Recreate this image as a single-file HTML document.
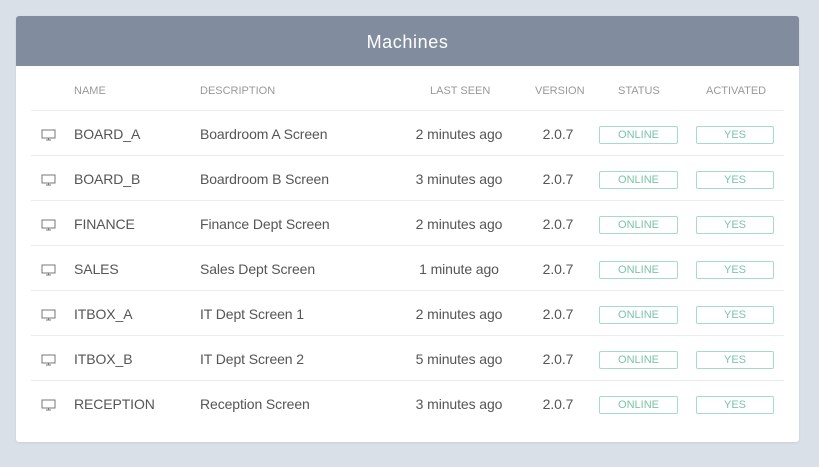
<!DOCTYPE html>
<html><head><style>
body{margin:0;width:819px;height:467px;background:#d9e0e8;font-family:"Liberation Sans",sans-serif;position:relative;overflow:hidden}
.card{position:absolute;left:16px;top:16px;width:783px;height:426px;background:#fff;border-radius:3px;box-shadow:0 1px 2px rgba(0,0,0,.08)}
.hd{height:50px;background:#818d9e;color:#fff;font-size:18px;text-align:center;line-height:52px;border-radius:3px 3px 0 0;letter-spacing:.6px}
.th{position:absolute;top:69px;font-size:11px;color:#999}
.row{position:absolute;left:15px;width:753px;height:45px;border-top:1px solid #ececec}
.row span{position:absolute;top:1px;line-height:45px;font-size:14px;color:#555;letter-spacing:-.1px}
.b{position:absolute;top:15px;height:16px;border:1px solid #a6dcc6;border-radius:2px;font-size:11px;color:#7cc4a6;text-align:center;line-height:17px}
.c{text-align:center}
</style></head><body>
<div class="card">
<div class="hd">Machines</div>
<div class="th" style="left:58px">NAME</div>
<div class="th" style="left:184px">DESCRIPTION</div>
<div class="th" style="left:414px">LAST SEEN</div>
<div class="th" style="left:519px">VERSION</div>
<div class="th" style="left:602px">STATUS</div>
<div class="th" style="left:690px">ACTIVATED</div>
</div>
<div id="rows"></div>
<script>
var d=[["BOARD_A","Boardroom A Screen","2 minutes ago"],["BOARD_B","Boardroom B Screen","3 minutes ago"],["FINANCE","Finance Dept Screen","2 minutes ago"],["SALES","Sales Dept Screen","1 minute ago"],["ITBOX_A","IT Dept Screen 1","2 minutes ago"],["ITBOX_B","IT Dept Screen 2","5 minutes ago"],["RECEPTION","Reception Screen","3 minutes ago"]];
var h="";d.forEach(function(r,i){var y=110+i*45;
h+='<div class="row" style="left:31px;top:'+y+'px">'+
'<svg style="position:absolute;left:10px;top:18px" width="15" height="12" viewBox="0 0 15 12"><rect x="1" y="1" width="13" height="8" fill="none" stroke="#777" stroke-width="1"/><path d="M5 11H10M7.5 9V11" stroke="#777"/></svg>'+
'<span style="left:43px">'+r[0]+'</span><span style="left:169px">'+r[1]+'</span>'+
'<span class="c" style="left:368px;width:120px">'+r[2]+'</span><span class="c" style="left:497px;width:60px">2.0.7</span>'+
'<div class="b" style="left:568px;width:77px">ONLINE</div><div class="b" style="left:665px;width:76px">YES</div></div>';});
document.getElementById("rows").innerHTML=h;
</script>
</body></html>
